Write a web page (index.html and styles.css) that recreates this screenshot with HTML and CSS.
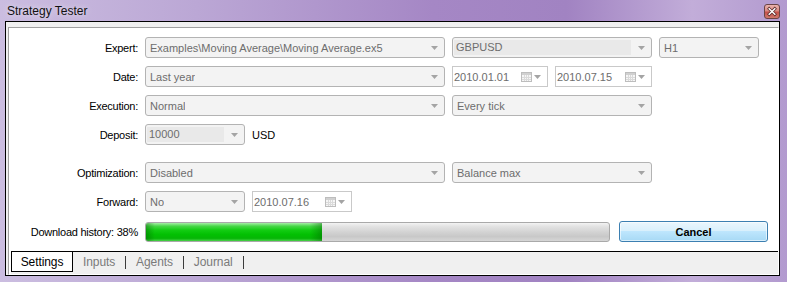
FILE: index.html
```html
<!DOCTYPE html>
<html>
<head>
<meta charset="utf-8">
<link rel="stylesheet" href="styles.css">
</head>
<body>
<div class="window">
  <div class="titlebar">
    <span class="title">Strategy Tester</span>
    <span class="close">
      <svg width="15" height="15" viewBox="0 0 15 15">
        <path d="M4.5 4.5 L10.5 10.5 M10.5 4.5 L4.5 10.5" stroke="#5a2a2a" stroke-width="3.2" stroke-linecap="square"/>
        <path d="M4.5 4.5 L10.5 10.5 M10.5 4.5 L4.5 10.5" stroke="#ffffff" stroke-width="1.6" stroke-linecap="square"/>
      </svg>
    </span>
  </div>
  <div class="client">
    <div class="panel">
      <div class="form">
        <div class="row">
          <span class="lbl">Expert:</span>
          <div class="combo w300"><span class="val">Examples\Moving Average\Moving Average.ex5</span><svg class="arrow" width="7" height="4" viewBox="0 0 7 4"><polygon points="0,0 7,0 3.5,4" fill="#a4a4a4"/></svg></div>
          <div class="combo edit w200"><span class="field">GBPUSD</span><svg class="arrow" width="7" height="4" viewBox="0 0 7 4"><polygon points="0,0 7,0 3.5,4" fill="#a4a4a4"/></svg></div>
          <div class="combo w100"><span class="val">H1</span><svg class="arrow" width="7" height="4" viewBox="0 0 7 4"><polygon points="0,0 7,0 3.5,4" fill="#a4a4a4"/></svg></div>
        </div>
        <div class="row">
          <span class="lbl">Date:</span>
          <div class="combo w300"><span class="val">Last year</span><svg class="arrow" width="7" height="4" viewBox="0 0 7 4"><polygon points="0,0 7,0 3.5,4" fill="#a4a4a4"/></svg></div>
          <div class="date w96"><span class="val">2010.01.01</span><svg class="cal" width="11" height="10" viewBox="0 0 11 10"><rect x="0.5" y="0.5" width="10" height="9" fill="#f6f6f6" stroke="#bdbdbd"/><rect x="1" y="1" width="9" height="2" fill="#d0d0d0"/><path d="M1 5.5 H10 M1 7.5 H10 M3.5 3 V9 M5.5 3 V9 M7.5 3 V9" stroke="#dadada" stroke-width="1"/></svg><svg class="darrow" width="7" height="4" viewBox="0 0 7 4"><polygon points="0,0 7,0 3.5,4" fill="#a4a4a4"/></svg></div>
          <div class="date w97"><span class="val">2010.07.15</span><svg class="cal" width="11" height="10" viewBox="0 0 11 10"><rect x="0.5" y="0.5" width="10" height="9" fill="#f6f6f6" stroke="#bdbdbd"/><rect x="1" y="1" width="9" height="2" fill="#d0d0d0"/><path d="M1 5.5 H10 M1 7.5 H10 M3.5 3 V9 M5.5 3 V9 M7.5 3 V9" stroke="#dadada" stroke-width="1"/></svg><svg class="darrow" width="7" height="4" viewBox="0 0 7 4"><polygon points="0,0 7,0 3.5,4" fill="#a4a4a4"/></svg></div>
        </div>
        <div class="row">
          <span class="lbl">Execution:</span>
          <div class="combo w300"><span class="val">Normal</span><svg class="arrow" width="7" height="4" viewBox="0 0 7 4"><polygon points="0,0 7,0 3.5,4" fill="#a4a4a4"/></svg></div>
          <div class="combo w200"><span class="val">Every tick</span><svg class="arrow" width="7" height="4" viewBox="0 0 7 4"><polygon points="0,0 7,0 3.5,4" fill="#a4a4a4"/></svg></div>
        </div>
        <div class="row">
          <span class="lbl">Deposit:</span>
          <div class="combo edit w100"><span class="field">10000</span><svg class="arrow" width="7" height="4" viewBox="0 0 7 4"><polygon points="0,0 7,0 3.5,4" fill="#a4a4a4"/></svg></div>
          <span class="unit">USD</span>
        </div>
        <div class="row gap-top">
          <span class="lbl">Optimization:</span>
          <div class="combo w300"><span class="val">Disabled</span><svg class="arrow" width="7" height="4" viewBox="0 0 7 4"><polygon points="0,0 7,0 3.5,4" fill="#a4a4a4"/></svg></div>
          <div class="combo w200"><span class="val">Balance max</span><svg class="arrow" width="7" height="4" viewBox="0 0 7 4"><polygon points="0,0 7,0 3.5,4" fill="#a4a4a4"/></svg></div>
        </div>
        <div class="row">
          <span class="lbl">Forward:</span>
          <div class="combo w100"><span class="val">No</span><svg class="arrow" width="7" height="4" viewBox="0 0 7 4"><polygon points="0,0 7,0 3.5,4" fill="#a4a4a4"/></svg></div>
          <div class="date w100"><span class="val">2010.07.16</span><svg class="cal" width="11" height="10" viewBox="0 0 11 10"><rect x="0.5" y="0.5" width="10" height="9" fill="#f6f6f6" stroke="#bdbdbd"/><rect x="1" y="1" width="9" height="2" fill="#d0d0d0"/><path d="M1 5.5 H10 M1 7.5 H10 M3.5 3 V9 M5.5 3 V9 M7.5 3 V9" stroke="#dadada" stroke-width="1"/></svg><svg class="darrow" width="7" height="4" viewBox="0 0 7 4"><polygon points="0,0 7,0 3.5,4" fill="#a4a4a4"/></svg></div>
        </div>
        <div class="row progress-row">
          <span class="lbl">Download history: 38%</span>
          <div class="progress"><div class="fill" style="width:38%"></div></div>
          <button class="btn">Cancel</button>
        </div>
      </div>
      <div class="tabs">
        <span class="tab active">Settings</span>
        <span class="tab">Inputs</span><span class="sep"></span>
        <span class="tab">Agents</span><span class="sep"></span>
        <span class="tab">Journal</span><span class="sep"></span>
      </div>
    </div>
  </div>
</div>
</body>
</html>
```

FILE: styles.css
```css
html, body {
  margin: 0;
  padding: 0;
}
body {
  width: 787px;
  height: 282px;
  overflow: hidden;
  font-family: "Liberation Sans", Arial, sans-serif;
  font-size: 11px;
}
.window {
  width: 787px;
  height: 282px;
  box-sizing: border-box;
  background: linear-gradient(90deg, #cbbde0 0%, #bba7d5 25%, #a587c5 55%, #a183c2 72%, #c2add9 88%, #b29acf 100%);
  display: flex;
  flex-direction: column;
}
.titlebar {
  height: 21px;
  display: flex;
  align-items: flex-start;
  flex-shrink: 0;
}
.title {
  font-size: 12px;
  line-height: 22px;
  color: #111;
  padding-left: 7px;
  text-shadow: 0 0 6px rgba(255,255,255,0.7);
}
.close {
  margin-left: auto;
  margin-right: 7px;
  margin-top: 4px;
  width: 16px;
  height: 15px;
  box-sizing: border-box;
  border: 1px solid #6b4545;
  border-radius: 3px;
  background: linear-gradient(#eab3ad 0%, #d98a82 45%, #c4514a 55%, #d07a6c 100%);
  display: flex;
  align-items: center;
  justify-content: center;
  overflow: hidden;
}
.close svg {
  display: block;
}
.client {
  margin-left: 5px;
  width: 775px;
  height: 255px;
  box-sizing: border-box;
  border: 1px solid #000;
  background: #f0f0f0;
  padding: 5px 0 0 2px;
  display: flex;
  flex-shrink: 0;
}
.panel {
  flex: 1;
  box-sizing: border-box;
  border-top: 1px solid #a0a0a0;
  border-left: 1px solid #a0a0a0;
  border-right: 1px solid #ffffff;
  border-bottom: 1px solid #ffffff;
  background: #fff;
  display: flex;
  flex-direction: column;
}
.form {
  padding: 9px 0 9px 0;
  display: flex;
  flex-direction: column;
  gap: 8px;
}
.row {
  height: 21px;
  display: flex;
  align-items: center;
}
.row.gap-top {
  margin-top: 9px;
}
.row.progress-row {
  margin-top: 1px;
}
.lbl {
  width: 129px;
  text-align: right;
  margin-right: 7px;
  color: #000;
  flex-shrink: 0;
  white-space: nowrap;
  letter-spacing: -0.25px;
}
.combo {
  height: 21px;
  box-sizing: border-box;
  border: 1px solid #b3b3b3;
  border-radius: 3px;
  background: #f3f3f3;
  display: flex;
  align-items: center;
  margin-right: 7px;
  color: #6d6d6d;
  flex-shrink: 0;
}
.combo .val {
  padding-left: 4px;
  white-space: nowrap;
  overflow: hidden;
}
.combo .arrow {
  margin-left: auto;
  margin-right: 6px;
  flex-shrink: 0;
}
.combo.edit .field {
  margin-left: 1px;
  height: 15px;
  line-height: 15px;
  background: #e9e9e9;
  flex: 1;
  padding-left: 2px;
}
.combo.edit .arrow {
  margin-left: 7px;
}
.w300 { width: 300px; }
.w200 { width: 200px; }
.w100 { width: 100px; }
.w96 { width: 96px; }
.w97 { width: 97px; }
.date {
  height: 21px;
  box-sizing: border-box;
  border: 1px solid #c9c9c9;
  background: #fff;
  display: flex;
  align-items: center;
  margin-right: 7px;
  color: #6d6d6d;
  flex-shrink: 0;
}
.date .val {
  padding-left: 1px;
  white-space: nowrap;
}
.date .cal {
  margin-left: auto;
  margin-right: 2px;
}
.date .darrow {
  margin-right: 6px;
}
.unit {
  color: #000;
}
.progress {
  width: 465px;
  height: 20px;
  margin-top: 1px;
  box-sizing: border-box;
  border: 1px solid #a9a9a9;
  border-radius: 3px;
  background: linear-gradient(#f3f3f3 0%, #e2e2e2 20%, #d3d3d3 50%, #c8c8c8 75%, #d6d6d6 100%);
  overflow: hidden;
  flex-shrink: 0;
}
.fill {
  height: 100%;
  background:
    linear-gradient(90deg, rgba(0,90,0,0.4) 0%, rgba(0,90,0,0) 5%, rgba(0,90,0,0) 93%, rgba(0,90,0,0.4) 100%),
    linear-gradient(#a6eea6 0%, #46d646 18%, #12cc12 40%, #02c002 65%, #06b606 85%, #4ad24a 100%);
}
.btn {
  margin-left: 9px;
  width: 149px;
  height: 21px;
  box-sizing: border-box;
  border: 1px solid #3c7fb1;
  border-radius: 3px;
  background: linear-gradient(#eaf6fd 0%, #d9f0fc 45%, #bee6fd 50%, #a7d9f5 100%);
  box-shadow: inset 0 0 0 1px rgba(255,255,255,0.6);
  font-family: "Liberation Sans", Arial, sans-serif;
  font-size: 11px;
  font-weight: bold;
  color: #000;
  padding: 0;
  flex-shrink: 0;
}
.tabs {
  flex: 1;
  margin-left: 2px;
  border-top: 1px solid #000;
  background: #f0f0f0;
  display: flex;
  align-items: flex-start;
  font-size: 12px;
}
.tab {
  height: 20px;
  line-height: 21px;
  padding: 0 10px 0 10px;
  color: #7a7a7a;
  box-sizing: border-box;
  letter-spacing: -0.1px;
}
.tab.active {
  width: 62px;
  padding: 0;
  text-align: center;
  background: #fff;
  color: #000;
  border-left: 1px solid #000;
  border-right: 1px solid #000;
  border-bottom: 1px solid #000;
}
.sep {
  width: 1px;
  height: 13px;
  margin-top: 4px;
  background: #3c3c3c;
}
```
